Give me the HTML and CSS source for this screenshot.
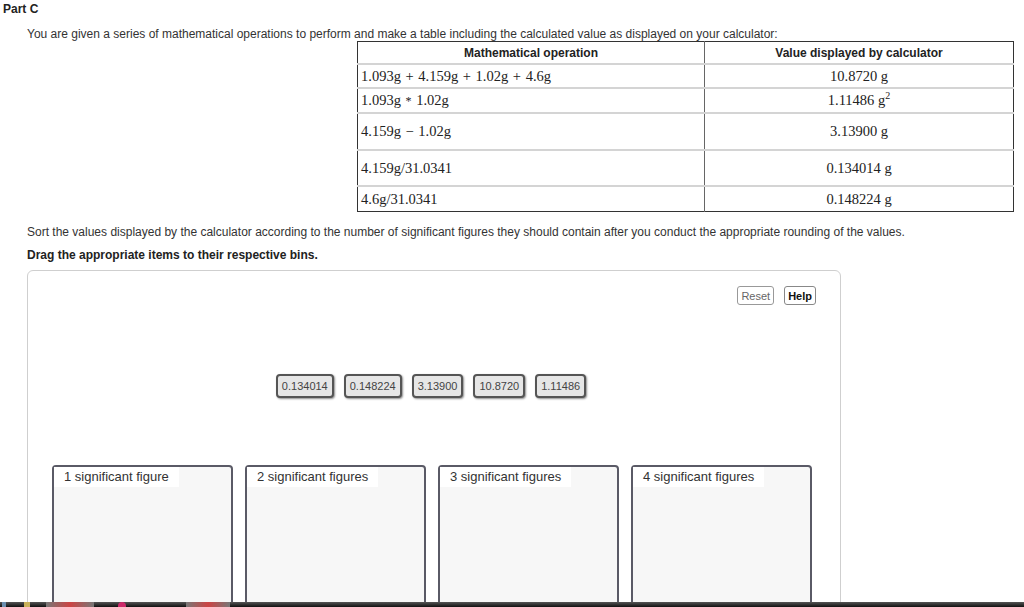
FILE: index.html
```html
<!DOCTYPE html>
<html>
<head>
<meta charset="utf-8">
<link rel="stylesheet" href="styles.css">
</head>
<body>
<div class="page">
  <div class="part">Part C</div>
  <p class="intro">You are given a series of mathematical operations to perform and make a table including the calculated value as displayed on your calculator:</p>
  <table class="ops">
    <thead>
      <tr><th class="c1">Mathematical operation</th><th class="c2">Value displayed by calculator</th></tr>
    </thead>
    <tbody>
      <tr class="r1"><td class="m">1.093g + 4.159g + 1.02g + 4.6g</td><td class="v">10.8720 g</td></tr>
      <tr class="r2"><td class="m">1.093g <span class="ast">*</span> 1.02g</td><td class="v">1.11486 g<sup>2</sup></td></tr>
      <tr class="r3"><td class="m">4.159g − 1.02g</td><td class="v">3.13900 g</td></tr>
      <tr class="r4"><td class="m">4.159g/31.0341</td><td class="v">0.134014 g</td></tr>
      <tr class="r5"><td class="m">4.6g/31.0341</td><td class="v">0.148224 g</td></tr>
    </tbody>
  </table>
  <p class="sort">Sort the values displayed by the calculator according to the number of significant figures they should contain after you conduct the appropriate rounding of the values.</p>
  <p class="drag">Drag the appropriate items to their respective bins.</p>
  <div class="board">
    <div class="tools">
      <button class="btn reset">Reset</button>
      <button class="btn help">Help</button>
    </div>
    <div class="tokens">
      <span class="token">0.134014</span>
      <span class="token">0.148224</span>
      <span class="token">3.13900</span>
      <span class="token">10.8720</span>
      <span class="token">1.11486</span>
    </div>
    <div class="bins">
      <div class="bin"><span class="label">1 significant figure</span></div>
      <div class="bin"><span class="label">2 significant figures</span></div>
      <div class="bin"><span class="label">3 significant figures</span></div>
      <div class="bin"><span class="label">4 significant figures</span></div>
    </div>
  </div>
</div>
<div class="taskbar">
  <span class="tb tb-a"></span>
  <span class="tb tb-b"></span>
  <span class="tb tb-c"></span>
  <span class="tb tb-d"></span>
  <span class="tb tb-e"></span>
</div>
</body>
</html>
```
FILE: styles.css
```css
html, body {
  margin: 0;
  padding: 0;
  height: 607px;
  overflow: hidden;
  background: #fff;
}
body {
  font-family: "Liberation Sans", Arial, sans-serif;
  font-size: 12px;
  color: #333;
}
.page {
  display: flex;
  flex-direction: column;
}
.part {
  font-weight: bold;
  font-size: 12px;
  color: #222;
  margin: 2px 0 0 3px;
  line-height: 14px;
}
.intro {
  margin: 11px 0 0 27px;
  line-height: 14px;
  color: #333;
}
.ops {
  margin: 0 0 0 357px;
  width: 657px;
  border-collapse: collapse;
  border: 1px solid #333;
}
.ops th {
  font-family: "Liberation Sans", Arial, sans-serif;
  font-size: 12px;
  font-weight: bold;
  color: #222;
  height: 21px;
  padding: 0;
  text-align: center;
  border-bottom: 2px solid #d4d4d4;
}
.ops th.c1 { width: 346px; border-right: 1px solid #666; }
.ops td {
  padding: 0 0 0 3px;
  font-family: "Liberation Serif", "Times New Roman", serif;
  font-size: 14.5px;
  color: #222;
  border-bottom: 2px solid #d4d4d4;
}
.ops td.m { border-right: 1px solid #666; text-align: left; word-spacing: 1px; }
.ops td.v { text-align: center; padding: 0; }
.ast { font-size: 12px; }
.ops tr.r5 td { border-bottom: none; }
.ops tr.r1 td { height: 22px; }
.ops tr.r2 td { height: 23px; }
.ops tr.r3 td { height: 35px; }
.ops tr.r4 td { height: 34px; }
.ops tr.r5 td { height: 24px; }
.ops sup { font-size: 10px; line-height: 0; }
.sort {
  margin: 13px 0 0 27px;
  line-height: 14px;
  font-size: 12px;
  color: #333;
}
.drag {
  margin: 9px 0 0 27px;
  line-height: 14px;
  font-size: 12px;
  font-weight: bold;
  color: #222;
}
.board {
  margin: 8px 0 0 27px;
  width: 812px;
  height: 400px;
  border: 1px solid #cfcfcf;
  border-radius: 6px;
  display: flex;
  flex-direction: column;
}
.tools {
  display: flex;
  justify-content: flex-end;
  gap: 10px;
  padding: 15px 24px 0 0;
}
.btn {
  font-family: "Liberation Sans", Arial, sans-serif;
  font-size: 11px;
  height: 19px;
  padding: 0 3px;
  background: #fff;
  border: 1px solid #999;
  border-radius: 3px;
  line-height: 16px;
}
.btn.reset { color: #666; }
.btn.help { color: #111; font-weight: bold; border-color: #888; }
.tokens {
  display: flex;
  justify-content: center;
  gap: 10px;
  margin: 69px 0 0 -6px;
}
.token {
  box-sizing: border-box;
  height: 24px;
  line-height: 20px;
  padding: 0 4px;
  border: 2px solid #555;
  border-radius: 4px;
  background: #e6e6e6;
  color: #444;
  font-size: 11px;
  box-shadow: 1px 1px 2px rgba(0,0,0,0.45);
}
.bins {
  display: flex;
  gap: 12px;
  margin: 67px 0 0 24px;
}
.bin {
  box-sizing: border-box;
  width: 181px;
  height: 200px;
  border: 2px solid #5a5a66;
  border-radius: 4px;
  background: #f7f7f7;
}
.label {
  display: inline-block;
  background: #fff;
  color: #333;
  font-size: 13px;
  line-height: 20px;
  padding: 0 10px;
}
.taskbar {
  position: fixed;
  left: 0;
  right: 0;
  bottom: 0;
  height: 5px;
  background: linear-gradient(#555, #111);
  display: flex;
  align-items: flex-start;
}
.tb {
  display: block;
  height: 5px;
}
.tb-a { width: 4px; margin-left: 2px; background: #6a8fb0; }
.tb-b { width: 6px; margin-left: 18px; background: #c9b15a; }
.tb-c { width: 48px; margin-left: 16px; background: linear-gradient(90deg, #777, #c44 50%, #777); }
.tb-d { width: 8px; margin-left: 24px; background: #cc2a6a; border-radius: 4px 4px 0 0; }
.tb-e { width: 44px; margin-left: 60px; background: linear-gradient(90deg, #777, #c44 50%, #777); }
```
